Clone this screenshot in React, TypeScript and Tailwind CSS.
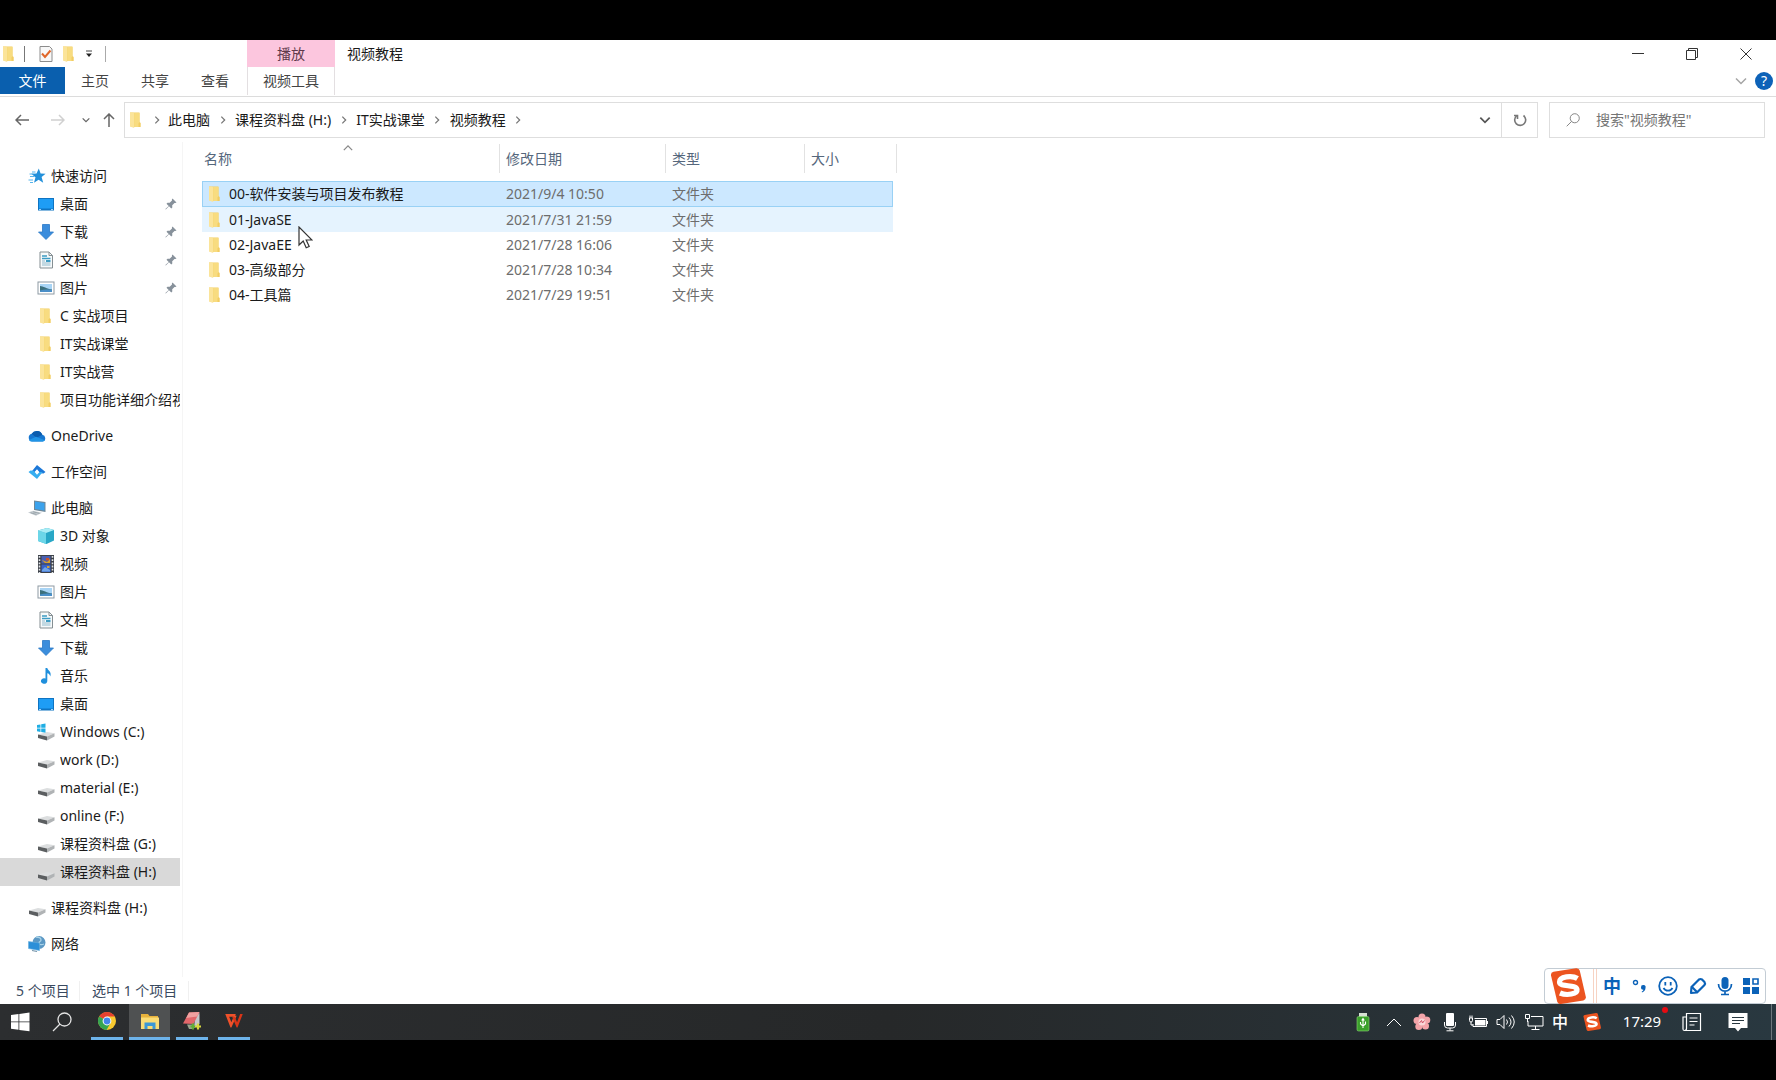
import { useState, type ReactNode } from 'react'

type IconProps = { className?: string }

/* ---------- small glyphs ---------- */

function Chevron({ className = '', d }: { className?: string; d: string }) {
  return (
    <svg viewBox="0 0 12 12" className={className} fill="none" stroke="currentColor" strokeWidth="1.5">
      <path d={d} />
    </svg>
  )
}

const RIGHT = 'M4 2l4 4-4 4'
const DOWN = 'M2 4l4 4 4-4'
const UP = 'M1 8.5l5-5 5 5'

function FolderIcon({ className = 'w-[18px] h-[18px]' }: IconProps) {
  return (
    <svg viewBox="0 0 18 18" className={className}>
      <path d="M3 1.500h9.500V11l1.200 1v4H4L3 14z" fill="#f2cd62" />
      <path d="M3 1.500h3l1.200 1V17L3 15.500z" fill="#fbe49a" />
      <path d="M7.200 2h5.300v9l-1 1.500V16H7.200z" fill="#f8dc80" />
    </svg>
  )
}

function StarIcon() {
  return (
    <svg viewBox="0 0 18 18" className="w-[18px] h-[18px]">
      <path d="M10.800 1.500l1.800 5 5 .2-4 3.400 1.600 5.600-4.600-3-4.600 3 1.500-5.500L3.200 6.800l5.300-.3z" fill="#2390da" />
      <path d="M1.500 7h4M2 9.500h4.500M.5 13h4.500M4 5h3.500M2 15.500h3" stroke="#56b5ec" strokeWidth="1" />
    </svg>
  )
}

function DesktopIcon() {
  return (
    <svg viewBox="0 0 18 18" className="w-[18px] h-[18px]">
      <rect x="1" y="3" width="16" height="12.500" fill="#0f74c2" />
      <rect x="2" y="4" width="14" height="9.500" fill="#1e9df5" />
      <path d="M2 14.500h2M14 14.500h2" stroke="#9bd4fb" />
    </svg>
  )
}

function DownloadIcon() {
  return (
    <svg viewBox="0 0 18 18" className="w-[18px] h-[18px]">
      <path d="M5.500 1.500h7v7.500h4L9 16.500 1.500 9h4z" fill="#3b8ddc" stroke="#2a78c6" strokeWidth=".8" />
    </svg>
  )
}

function DocIcon() {
  return (
    <svg viewBox="0 0 18 18" className="w-[18px] h-[18px]">
      <path d="M3 1h9l3.500 3.500V17H3z" fill="#f7fafb" stroke="#858f93" />
      <path d="M12 1v3.500h3.500" fill="none" stroke="#858f93" />
      <path d="M5 5h5M5 7.500h8.500" stroke="#3d9cc4" strokeWidth="1.400" />
      <path d="M5 10h3M5 12h8.500M5 14h8.500" stroke="#8fb9cb" />
      <path d="M9 10h4.500" stroke="#3d9cc4" strokeWidth="2" />
    </svg>
  )
}

function PictureIcon() {
  return (
    <svg viewBox="0 0 18 18" className="w-[18px] h-[18px]">
      <rect x="1" y="3" width="16" height="12" fill="#fff" stroke="#8e9aa3" />
      <rect x="3" y="5" width="12" height="8" fill="#a8d4f5" />
      <path d="M3 7c3 0 7 3 12 3.500V12H3z" fill="#3a6f7c" />
      <path d="M3 11.500c4-1.200 8-1.200 12-.6V13H3z" fill="#4a8fc8" />
    </svg>
  )
}

function CloudIcon() {
  return (
    <svg viewBox="0 0 18 18" className="w-[18px] h-[18px]">
      <path d="M4 14.500a4 4 0 0 1-.3-7.800 6 6 0 0 1 10.600 1 3.500 3.500 0 0 1 .5 6.800z" fill="#1676d0" />
      <path d="M3.700 6.700a6 6 0 0 1 10.600 1l-5.800 3z" fill="#0b5cad" />
      <path d="M1 13l7-3.300 9 3.600c-.5.700-1.200 1.200-2.200 1.200H4c-1.300 0-2.400-.5-3-1.500z" fill="#2094e6" />
    </svg>
  )
}

function WorkspaceIcon() {
  return (
    <svg viewBox="0 0 18 18" className="w-[18px] h-[18px]">
      <path d="M9 2l8.500 7-2 1.500-3.200-.2L9 6.200 6.500 9H3.300z" fill="#1c78d8" />
      <path d="M9 16L.5 9l2-1.500 3.200.2L9 11.800 11.500 9h3.200z" fill="#36aef0" />
    </svg>
  )
}

function PcIcon() {
  return (
    <svg viewBox="0 0 18 18" className="w-[18px] h-[18px]">
      <path d="M6 1.500l11.500 1.500v10L6 11z" fill="#6f8797" />
      <path d="M7 2.600L16.500 4v7.500L7 9.900z" fill="#3ba2ec" />
      <path d="M0 13.500l5-1.800 9 2-6 3z" fill="#c6cdd2" />
      <path d="M2.500 13.700l6 1.800M5 12.800l6.500 1.600" stroke="#8f9aa1" strokeWidth=".8" />
    </svg>
  )
}

function CubeIcon() {
  return (
    <svg viewBox="0 0 18 18" className="w-[18px] h-[18px]">
      <path d="M1 3.500L10 1l7 2v10.500L9.500 17 1 14z" fill="#28a7c6" />
      <path d="M1 3.500l8 2.500v11L1 14z" fill="#6cd6e8" />
      <path d="M1 3.500L10 1l7 2-8 3z" fill="#a9edf5" />
    </svg>
  )
}

function VideoIcon() {
  return (
    <svg viewBox="0 0 18 18" className="w-[18px] h-[18px]">
      <rect x="1" y="0" width="16" height="18" fill="#3c4148" />
      <path d="M2.500 1v17M15.500 1v17" stroke="#e1e4e8" strokeWidth="1.600" strokeDasharray="1.800 1.400" />
      <rect x="4.500" y="1" width="9" height="7.500" fill="#4a5fb2" />
      <rect x="4.500" y="9.500" width="9" height="7.500" fill="#3762c9" />
      <path d="M5 5l5 2 3-3v4H8z" fill="#d7a129" />
      <path d="M9 3h3v2.500H9z" fill="#c7502b" />
      <path d="M5 15l3-3 5 3v1.500H5z" fill="#6fa4e8" />
      <path d="M10 11h2.500v2H10z" fill="#d0a23a" />
    </svg>
  )
}

function MusicIcon() {
  return (
    <svg viewBox="0 0 18 18" className="w-[18px] h-[18px]">
      <path d="M8.500 1h1.800c.4 2.600 4.700 3.500 3 8.500-.4-2-1.500-3-3-3.300V14a3.200 2.800 0 1 1-1.800-2.500z" fill="#1f8fdc" />
    </svg>
  )
}

function DriveIcon({ windows = false }: { windows?: boolean }) {
  return (
    <svg viewBox="0 0 18 18" className="w-[18px] h-[18px]">
      <path d="M1 11.500L10 9l7.500 1.200-7.500 3.300z" fill="#dcdedf" />
      <path d="M1 11.500l9 2v4l-9-2.500z" fill="#5b5e60" />
      <path d="M10 13.500l7.500-3.300v3.300L10 17.500z" fill="#b0b3b5" />
      {windows && (
        <path d="M0 2l3.500-.6v3.300H0zM4.200 1.300L8.500.5v4.200H4.200zM0 5.500h3.500v3.400L0 8.300zM4.200 5.500h4.300v4.200L4.200 9z" fill="#20aee4" />
      )}
    </svg>
  )
}

function NetworkIcon() {
  return (
    <svg viewBox="0 0 18 18" className="w-[18px] h-[18px]">
      <circle cx="11" cy="7.500" r="6.500" fill="#5b98c4" />
      <path d="M8 2c3 0 5 1 5 3s-2 1-2 3 3 2 5 1" fill="none" stroke="#a9d3e8" strokeWidth="1.300" />
      <path d="M.5 6.500l11 1.500v7.500l-11-2z" fill="#2b8fd8" stroke="#64aede" strokeWidth=".6" />
      <path d="M4 15.500l5 1" stroke="#7192a8" strokeWidth="1.200" />
    </svg>
  )
}

function PinIcon() {
  return (
    <svg viewBox="0 0 12 12" className="w-3 h-3 shrink-0">
      <path d="M7.500.5l4 4-1.200.6-.8-.1L7.200 7.300l.1 2.200-1 1L4 8.200.8 11.500l-.4-.4L3.700 7.900 1.500 5.700l1-1 2.200.1L7 2.500l-.1-.9z" fill="#87919b" />
    </svg>
  )
}

function SearchIcon({ className }: IconProps) {
  return (
    <svg viewBox="0 0 20 20" className={className} fill="none" stroke="currentColor" strokeWidth="1.300">
      <circle cx="12.500" cy="7.500" r="6.500" />
      <path d="M8 12l-7 7" />
    </svg>
  )
}

function SogouIcon({ className }: IconProps) {
  return (
    <svg viewBox="0 0 36 36" className={className}>
      <path d="M1 7.500Q.5 4.500 3.500 3.800L26 .2q3-.4 3.800 2.500l6 26q.5 3-2.500 3.700L11 36q-3 .4-3.800-2.500z" fill="#ec5420" />
      <path
        d="M27.500 10.500C22 7 9.500 8.500 9.500 14c0 5.500 16.500 2 17.500 7.500.6 4.500-10 6.500-17 3.500"
        fill="none"
        stroke="#fff"
        strokeWidth="5.200"
      />
    </svg>
  )
}

/* ---------- title bar and ribbon ---------- */

function TitleBar() {
  return (
    <header className="flex h-[27px] items-stretch">
      <div className="flex w-[247px] items-center">
        <FolderIcon />
        <span className="ml-1.5 h-4 w-px bg-[#777]" />
        <button aria-label="属性" className="ml-3.5">
          <svg viewBox="0 0 14 18" className="w-3.5 h-[18px]">
            <path d="M1 1.500h9.500l2.500 2.500v12.500H1z" fill="#f8f8f8" stroke="#8c8c8c" />
            <path d="M3 8.500l3 3.500 5.500-6.500" fill="none" stroke="#e0672a" strokeWidth="2" />
          </svg>
        </button>
        <button aria-label="新建文件夹" className="ml-[7px]">
          <FolderIcon />
        </button>
        <button aria-label="自定义快速访问工具栏" className="ml-[7px]">
          <svg viewBox="0 0 8 8" className="w-2 h-2">
            <path d="M1 1h6" stroke="#444" />
            <path d="M1 3.500h6L4 7z" fill="#222" />
          </svg>
        </button>
        <span className="ml-3 h-4 w-px bg-[#aaa]" />
      </div>
      <div className="flex w-[88px] items-center justify-center bg-[#fcc6de] text-[#5f3a4b]">播放</div>
      <h1 className="flex flex-1 items-center pl-3">视频教程</h1>
      <div className="mr-[3px] flex text-[#333]">
        <button aria-label="最小化" className="flex w-[54px] items-center justify-center">
          <svg viewBox="0 0 12 12" className="w-3 h-3" stroke="currentColor"><path d="M0 5.500h12" /></svg>
        </button>
        <button aria-label="还原" className="flex w-[54px] items-center justify-center">
          <svg viewBox="0 0 12 12" className="w-3 h-3" fill="none" stroke="currentColor">
            <path d="M.5 2.500h9v9h-9zM2.500 2.500v-2h9v9h-2" />
          </svg>
        </button>
        <button aria-label="关闭" className="flex w-[54px] items-center justify-center">
          <svg viewBox="0 0 12 12" className="w-3 h-3" stroke="currentColor"><path d="M.5.5l11 11M11.500.5l-11 11" /></svg>
        </button>
      </div>
    </header>
  )
}

function RibbonTabs() {
  return (
    <nav className="flex h-[30px] items-start border-b border-[#dcdcdc] text-[#444]">
      <button className="h-[27px] w-[65px] bg-[#0a5fae] text-white">文件</button>
      {['主页', '共享', '查看'].map((label) => (
        <button key={label} className="h-7 w-[60px]">{label}</button>
      ))}
      <button className="ml-0.5 h-7 w-[88px] border-x border-[#e3dfe1]">视频工具</button>
      <div className="ml-auto flex h-7 items-center gap-2 pr-[3px]">
        <button aria-label="展开功能区">
          <Chevron d="M1 3.500l5 5 5-5" className="w-3 h-3 text-[#a5a5a5]" />
        </button>
        <button aria-label="帮助" className="h-[18px] w-[18px] rounded-full bg-[#0d62b8] leading-[18px] text-white">?</button>
      </div>
    </nav>
  )
}

const crumbs = ['此电脑', '课程资料盘 (H:)', 'IT实战课堂', '视频教程']

function AddressBar() {
  return (
    <div className="flex h-[45px] items-start pt-[5px] pr-[11px]">
      <div className="mr-0.5 flex h-9 items-center pl-1 text-[#666]">
        <button aria-label="后退" className="flex w-9 justify-center">
          <svg viewBox="0 0 14 12" className="w-3.5 h-3" fill="none" stroke="currentColor" strokeWidth="1.500">
            <path d="M6 1L1 6l5 5M1 6h13" />
          </svg>
        </button>
        <button aria-label="前进" className="flex w-9 justify-center text-[#d0d0d0]">
          <svg viewBox="0 0 14 12" className="w-3.5 h-3" fill="none" stroke="currentColor" strokeWidth="1.500">
            <path d="M8 1l5 5-5 5M13 6H0" />
          </svg>
        </button>
        <button aria-label="最近浏览的位置" className="flex w-5 justify-center">
          <Chevron d={DOWN} className="w-2.5 h-2.5" />
        </button>
        <button aria-label="上移" className="flex w-[26px] justify-center">
          <svg viewBox="0 0 12 14" className="w-3 h-3.5" fill="none" stroke="currentColor" strokeWidth="1.500">
            <path d="M1 6l5-5 5 5M6 1v13" />
          </svg>
        </button>
      </div>
      <div className="flex h-9 flex-1 items-stretch border border-[#dedede]">
        <div className="flex flex-1 items-center pl-0.5">
          <FolderIcon />
          <span className="flex w-[23px] justify-center text-[#777]"><Chevron d={RIGHT} className="w-2.5 h-2.5" /></span>
          {crumbs.map((name) => (
            <span key={name} className="flex items-center">
              <button className="whitespace-nowrap">{name}</button>
              <span className="flex w-[25px] justify-center text-[#777]"><Chevron d={RIGHT} className="w-2.5 h-2.5" /></span>
            </span>
          ))}
        </div>
        <button aria-label="上一个位置" className="flex w-8 items-center justify-center text-[#555]">
          <Chevron d={DOWN} className="w-3.5 h-3.5" />
        </button>
        <button aria-label="刷新" className="flex w-9 items-center justify-center border-l border-[#dedede] text-[#777]">
          <svg viewBox="0 0 14 14" className="w-3.5 h-3.5" fill="none" stroke="currentColor" strokeWidth="1.600">
            <path d="M10.500 2.500A5.500 5.500 0 1 1 3.500 2.800" />
            <path d="M1 2.500h3.500V6" />
          </svg>
        </button>
      </div>
      <label className="ml-[11px] flex h-9 w-[216px] items-center border border-[#dedede] pl-4 text-[#7a7a7a]">
        <SearchIcon className="h-3.5 w-3.5 shrink-0" />
        <input
          aria-label="搜索"
          placeholder={'搜索"视频教程"'}
          className="ml-4 w-full min-w-0 outline-none placeholder:text-[#757575]"
        />
      </label>
    </div>
  )
}

/* ---------- navigation pane ---------- */

type NavItem = { id: string; label: string; icon: ReactNode; root?: boolean; pinned?: boolean }

const navGroups: NavItem[][] = [
  [
    { id: 'quick', label: '快速访问', icon: <StarIcon />, root: true },
    { id: 'q-desktop', label: '桌面', icon: <DesktopIcon />, pinned: true },
    { id: 'q-download', label: '下载', icon: <DownloadIcon />, pinned: true },
    { id: 'q-docs', label: '文档', icon: <DocIcon />, pinned: true },
    { id: 'q-pictures', label: '图片', icon: <PictureIcon />, pinned: true },
    { id: 'q-c', label: 'C 实战项目', icon: <FolderIcon /> },
    { id: 'q-class', label: 'IT实战课堂', icon: <FolderIcon /> },
    { id: 'q-camp', label: 'IT实战营', icon: <FolderIcon /> },
    { id: 'q-intro', label: '项目功能详细介绍视频', icon: <FolderIcon /> },
  ],
  [{ id: 'onedrive', label: 'OneDrive', icon: <CloudIcon />, root: true }],
  [{ id: 'workspace', label: '工作空间', icon: <WorkspaceIcon />, root: true }],
  [
    { id: 'pc', label: '此电脑', icon: <PcIcon />, root: true },
    { id: 'objects', label: '3D 对象', icon: <CubeIcon /> },
    { id: 'videos', label: '视频', icon: <VideoIcon /> },
    { id: 'pictures', label: '图片', icon: <PictureIcon /> },
    { id: 'docs', label: '文档', icon: <DocIcon /> },
    { id: 'downloads', label: '下载', icon: <DownloadIcon /> },
    { id: 'music', label: '音乐', icon: <MusicIcon /> },
    { id: 'desktop', label: '桌面', icon: <DesktopIcon /> },
    { id: 'c', label: 'Windows (C:)', icon: <DriveIcon windows /> },
    { id: 'd', label: 'work (D:)', icon: <DriveIcon /> },
    { id: 'e', label: 'material (E:)', icon: <DriveIcon /> },
    { id: 'f', label: 'online (F:)', icon: <DriveIcon /> },
    { id: 'g', label: '课程资料盘 (G:)', icon: <DriveIcon /> },
    { id: 'h', label: '课程资料盘 (H:)', icon: <DriveIcon /> },
  ],
  [{ id: 'h-root', label: '课程资料盘 (H:)', icon: <DriveIcon />, root: true }],
  [{ id: 'network', label: '网络', icon: <NetworkIcon />, root: true }],
]

function Sidebar() {
  const [current, setCurrent] = useState('h')

  return (
    <aside className="flex w-[183px] shrink-0 flex-col gap-2 border-r border-[#f5f5f5] pt-5 pr-0.5">
      {navGroups.map((group) => (
        <ul key={group[0].id}>
          {group.map((item) => (
            <li key={item.id}>
              <a
                href={`#${item.id}`}
                onClick={() => setCurrent(item.id)}
                className={`flex h-7 items-center gap-[5px] ${item.root ? 'pl-7' : 'pl-[37px]'} ${
                  item.pinned ? 'pr-[3px]' : ''
                } ${current === item.id ? 'bg-[#d9d9d9]' : ''}`}
              >
                <span className="shrink-0">{item.icon}</span>
                <span className="flex-1 overflow-hidden whitespace-nowrap">{item.label}</span>
                {item.pinned && <PinIcon />}
              </a>
            </li>
          ))}
        </ul>
      ))}
    </aside>
  )
}

/* ---------- file list ---------- */

const files = [
  { name: '00-软件安装与项目发布教程', date: '2021/9/4 10:50' },
  { name: '01-JavaSE', date: '2021/7/31 21:59' },
  { name: '02-JavaEE', date: '2021/7/28 16:06' },
  { name: '03-高级部分', date: '2021/7/28 10:34' },
  { name: '04-工具篇', date: '2021/7/29 19:51' },
]

const SELECTED = 'bg-[#cce8ff] border-y border-[#99d1f5]'
const HOVERED = 'bg-[#e5f3fe]'

function FileList() {
  return (
    <main className="relative flex-1 pt-0.5 pl-[19px]">
      <table className="w-[695px] table-fixed border-separate border-spacing-0 text-left">
        <colgroup>
          <col className="w-[298px]" />
          <col className="w-[166px]" />
          <col className="w-[139px]" />
          <col className="w-[88px]" />
          <col className="w-1" />
        </colgroup>
        <thead className="text-[#55677c]">
          <tr>
            <th className="relative p-0 pb-2 font-normal">
              <Chevron d={UP} className="absolute -top-px left-[141px] h-2.5 w-2.5 text-[#888]" />
              <div className="h-[29px] border-r border-[#e2e2e2] pl-0.5 leading-[30px]">名称</div>
            </th>
            <th className="p-0 pb-2 font-normal">
              <div className="h-[29px] border-r border-[#e2e2e2] pl-1.5 leading-[30px]">修改日期</div>
            </th>
            <th className="p-0 pb-2 font-normal">
              <div className="h-[29px] border-r border-[#e2e2e2] pl-1.5 leading-[30px]">类型</div>
            </th>
            <th className="p-0 pb-2 font-normal">
              <div className="h-[29px] pl-1.5 leading-[30px]">大小</div>
            </th>
            <td className="p-0 pb-2">
              <div className="h-[29px] border-r border-[#e2e2e2]" />
            </td>
          </tr>
        </thead>
        <tbody className="text-[#6d6d6d]">
          {files.map((file, i) => {
            const tone = i === 0 ? SELECTED : i === 1 ? HOVERED : ''
            return (
              <tr key={file.name} className="h-[25px] leading-6">
                <td className={`p-0 text-[#1a1a1a] ${tone} ${i === 0 ? 'border-l' : 'pl-px'}`}>
                  <div className="flex items-center gap-[5px] pl-[3px]">
                    <FolderIcon />
                    {file.name}
                  </div>
                </td>
                <td className={`p-0 pl-1.5 ${tone}`}>{file.date}</td>
                <td className={`p-0 pl-1.5 ${tone}`}>文件夹</td>
                <td className={`p-0 ${tone} ${i === 0 ? 'border-r' : ''}`} />
                <td className="p-0" />
              </tr>
            )
          })}
        </tbody>
      </table>
      {/* mouse pointer */}
      <svg viewBox="0 0 15 23" className="absolute top-[84px] left-[115px] h-[23px] w-[15px]">
        <path d="M1 1v18l4.200-4 3 6.800 3-1.300-3-6.500H14z" fill="#fff" stroke="#333" strokeWidth="1.200" />
      </svg>
    </main>
  )
}

function StatusBar() {
  return (
    <footer className="flex h-[27px] items-center pl-4 text-[#3a4a60]">
      <span className="w-16 border-r border-[#f0f0f0]">5 个项目</span>
      <span className="w-[109px] border-r border-[#f0f0f0] pl-3">选中 1 个项目</span>
    </footer>
  )
}

/* ---------- floating input method bar ---------- */

function ImeBar() {
  return (
    <div className="absolute right-2.5 bottom-0 flex h-9 w-[222px] items-center rounded-sm border border-[#c3ccd4] bg-white text-[#0b62b8]">
      <SogouIcon className="ml-1 h-9 w-[38px]" />
      <span className="ml-1.5 h-full w-1 border-x border-[#f7d3c3]" />
      <div className="flex flex-1 items-center justify-between pr-1.5 pl-[5px]">
        <button className="w-5 text-lg leading-5 font-bold">中</button>
        <button aria-label="标点">
          <svg viewBox="0 0 16 16" className="w-4 h-4">
            <circle cx="3.500" cy="4.500" r="2" fill="none" stroke="currentColor" strokeWidth="1.400" />
            <path d="M9 9.500a2.300 2.300 0 1 1 4.500.5c0 2-1.500 4-3.500 4.500l-.3-1c1-.4 1.600-1 1.700-1.800C10 11.800 9 11 9 9.500z" fill="currentColor" />
          </svg>
        </button>
        <button aria-label="表情">
          <svg viewBox="0 0 20 20" className="w-5 h-5" fill="none" stroke="currentColor" strokeWidth="1.800">
            <circle cx="10" cy="10" r="8.800" />
            <path d="M7.300 6v3.500M12.700 6v3.500M5.500 12c2 3.500 7 3.500 9 0" />
          </svg>
        </button>
        <button aria-label="手写">
          <svg viewBox="0 0 18 18" className="w-[18px] h-[18px]" fill="none" stroke="currentColor" strokeWidth="2.200" strokeLinejoin="round">
            <path d="M2 16l.5-6L10 2.500q1.500-1 3 0l2.500 2.500q1 1.500 0 3L8 15.500z" />
            <path d="M3 10l5 5" />
          </svg>
        </button>
        <button aria-label="语音">
          <svg viewBox="0 0 16 20" className="w-4 h-5">
            <rect x="4.500" y="1" width="7" height="12" rx="3.500" fill="currentColor" />
            <path d="M1.500 8c0 9.500 13 9.500 13 0M8 15v4M4 18.500h8" fill="none" stroke="currentColor" strokeWidth="1.700" />
          </svg>
        </button>
        <button aria-label="工具箱">
          <svg viewBox="0 0 16 16" className="w-4 h-4" fill="currentColor">
            <path d="M0 0h7v7H0zM0 9h7v7H0zM9 9h7v7H9z" />
            <path d="M10 1h5v5h-5z" fill="none" stroke="currentColor" strokeWidth="1.600" />
          </svg>
        </button>
      </div>
    </div>
  )
}

/* ---------- taskbar ---------- */

function TaskButton({ label, active, wide, children }: { label: string; active?: boolean; wide?: boolean; children: ReactNode }) {
  return (
    <button
      aria-label={label}
      className={`flex h-9 items-center justify-center border-b-[3px] border-[#6db3ea] ${wide ? 'w-[41px]' : 'w-8'} ${
        active ? 'bg-[#4f5152]' : ''
      }`}
    >
      {children}
    </button>
  )
}

function Taskbar() {
  return (
    <div className="flex h-9 items-center bg-linear-to-r from-[#2c2e30] via-[#262829] to-[#293840] text-white">
      <button aria-label="开始" className="flex w-10 justify-center">
        <svg viewBox="0 0 20 20" className="w-5 h-5" fill="#fff">
          <path d="M1 3l7.500-1v7.500H1zM9.300 1.900L19.500.5v9H9.300zM1 10.300h7.500v7.500L1 16.800zM9.300 10.300h10.200v9l-10.200-1.400z" />
        </svg>
      </button>
      <button aria-label="搜索" className="mr-[7px] flex w-11 justify-center text-[#e4e4e4]">
        <SearchIcon className="w-5 h-5" />
      </button>
      <div className="flex">
        <div className="mr-1.5">
          <TaskButton label="Google Chrome">
            <svg viewBox="0 0 20 20" className="w-5 h-5">
              <circle cx="10" cy="10" r="9" fill="#f8c930" />
              <path d="M10 10L2.200 5.500A9 9 0 0 1 17.800 5.500H10z" fill="#e5402f" />
              <path d="M10 10L2.200 5.500A9 9 0 0 0 9.500 19l4-7z" fill="#35a552" />
              <circle cx="10" cy="10" r="4.400" fill="#fff" />
              <circle cx="10" cy="10" r="3.400" fill="#4385ea" />
            </svg>
          </TaskButton>
        </div>
        <div className="mr-1.5">
          <TaskButton label="文件资源管理器" active wide>
            <svg viewBox="0 0 20 18" className="w-5 h-[18px]">
              <path d="M1 2h7l1.500 2H18v12H1z" fill="#e8b23c" />
              <path d="M1 5.500h18V17H1z" fill="#fbdc75" />
              <path d="M4.500 17v-6.500h11V17h-3v-3h-5v3z" fill="#3c98d6" />
            </svg>
          </TaskButton>
        </div>
        <div className="mr-2.5">
          <TaskButton label="录屏工具">
            <svg viewBox="0 0 20 20" className="w-5 h-5">
              <path d="M13 6l4.500-4v11L12 17z" fill="#c5c8cb" />
              <path d="M7 1.500l10.500-.5-6 12L1 12.500z" fill="#e2676b" />
              <path d="M7 1.500l10.500-.5-2.300 4.500L4.200 7z" fill="#f0a1a0" />
              <path d="M5 13.500h6l-1 4.500H7z" fill="#9aa58f" />
              <path d="M11 12.500v6M8.500 15.500h5" stroke="#5fae35" strokeWidth="2.200" />
              <path d="M16 12.500v6M13 15.500h6" stroke="#d8d840" strokeWidth="2.200" />
            </svg>
          </TaskButton>
        </div>
        <TaskButton label="WPS Office">
          <svg viewBox="0 0 20 16" className="w-[18px] h-3.5">
            <path d="M0 0h12l-1 3H4.500L7 9.500 10 2h3l-6 13.500H6z" fill="#f0512a" />
            <path d="M8 3.500h3L13.500 9.500 17 0h3l-6 15.500h-1z" fill="#d93517" />
          </svg>
        </TaskButton>
      </div>

      <div className="ml-auto flex items-center">
        <span className="flex w-8 justify-center">
          <svg viewBox="0 0 14 20" className="w-3.5 h-5">
            <path d="M3 1h8v4H3z" fill="#d8e1d4" />
            <rect x="1" y="4.500" width="12" height="14.500" rx="1.500" fill="#3ba02c" stroke="#8fd876" strokeWidth=".6" />
            <path d="M7 16V7.500M4.500 10v2L7 14l2.500-2v-2.500M5.700 8.500L7 6.500l1.300 2" fill="none" stroke="#fff" strokeWidth="1.100" />
          </svg>
        </span>
        <button aria-label="显示隐藏的图标" className="flex w-[29px] justify-center">
          <svg viewBox="0 0 16 10" className="w-4 h-2.5" fill="none" stroke="#fff"><path d="M1 9l7-7 7 7" /></svg>
        </button>
        <span className="flex w-7 justify-center">
          <svg viewBox="0 0 18 18" className="w-[18px] h-[18px]">
            <g fill="#f4a4a9">
              <circle cx="9" cy="4" r="3.500" />
              <circle cx="13.800" cy="7" r="3.500" />
              <circle cx="12.500" cy="13" r="3.500" />
              <circle cx="5.800" cy="13.500" r="3.500" />
              <circle cx="4" cy="7.500" r="3.500" />
            </g>
            <circle cx="9" cy="9" r="3.500" fill="#f9d7d8" />
            <path d="M6.500 10l2-2.500 1 2.500 2-2.500" fill="none" stroke="#cf4f63" />
          </svg>
        </span>
        <span className="flex w-7 justify-center">
          <svg viewBox="0 0 14 20" className="w-3.5 h-5">
            <rect x="3" y="1" width="8" height="13" rx="1" fill="#fff" />
            <path d="M1.500 10v3q0 3 3 3h5q3 0 3-3v-3M7 16v2.500M3.500 18.800h7" fill="none" stroke="#fff" />
          </svg>
        </span>
        <span className="flex w-7 justify-center">
          <svg viewBox="0 0 20 14" className="w-5 h-3.5" fill="none" stroke="#fff">
            <path d="M6.500 3.500h12v8H5V9M19.500 6v3" />
            <path d="M7 5h10.500v5.500H7z" fill="#fff" stroke="none" />
            <path d="M1.500 3v2.500q0 1.500 1.500 1.500t1.500-1.500V3zM2 3V.5M4 3V.5M3 7v3h2" />
          </svg>
        </span>
        <span className="flex w-7 justify-center">
          <svg viewBox="0 0 20 16" className="w-5 h-4" fill="none" stroke="#fff">
            <path d="M1 5.500h3l4-4v13l-4-4H1zM10.500 5.500q2 2.500 0 5M13 3.500q4 4.500 0 9M15.500 1.500q5.500 6.500 0 13" />
          </svg>
        </span>
        <span className="flex w-7 justify-center">
          <svg viewBox="0 0 20 18" className="w-5 h-[18px]" fill="none" stroke="#fff">
            <path d="M7 3.500h12v9.500H4V8M11.500 13v3M7.500 16.500h8" />
            <path d="M1.500 1.500h4v4h-4zM3.500 5.500V9" />
          </svg>
        </span>
        <button aria-label="输入法" className="w-6 text-center text-base font-medium">中</button>
        <span className="flex w-10 justify-center"><SogouIcon className="w-[18px] h-[18px]" /></span>
        <time className="relative w-[60px] text-center text-[15px]">
          17:29
          <span className="absolute -top-1 right-1 h-1.5 w-1.5 rounded-full bg-[#e60b12]" />
        </time>
        <span className="flex w-10 justify-center">
          <svg viewBox="0 0 20 20" className="w-5 h-5" fill="none" stroke="#fff" strokeWidth="1.200">
            <path d="M4.500 1.500h14v17h-16q-1.500 0-1.500-1.500V5h3.500zM4.500 5v11.500q0 2-2 2M7.500 6h8M7.500 9.500h8M7.500 13h5" />
          </svg>
        </span>
        <button aria-label="通知" className="flex w-[52px] justify-center">
          <svg viewBox="0 0 20 20" className="w-5 h-5">
            <path d="M.5 1h19v15H13l-3 3.500L7 16H.5z" fill="#fff" />
            <path d="M4 5.500h12M4 8.500h12M4 11.500h8" stroke="#293840" strokeWidth="1.200" />
          </svg>
        </button>
        <span className="mr-1 ml-[7px] h-9 w-px bg-[#6c777d]" />
      </div>
    </div>
  )
}

export default function App() {
  return (
    <div className="flex min-h-screen flex-col bg-black py-10 font-['Noto_Sans','Noto_Sans_CJK_SC',sans-serif] text-sm text-[#1a1a1a]">
      <div className="relative flex flex-1 flex-col bg-white">
        <TitleBar />
        <RibbonTabs />
        <AddressBar />
        <div className="flex flex-1">
          <Sidebar />
          <FileList />
        </div>
        <StatusBar />
        <ImeBar />
      </div>
      <Taskbar />
    </div>
  )
}
